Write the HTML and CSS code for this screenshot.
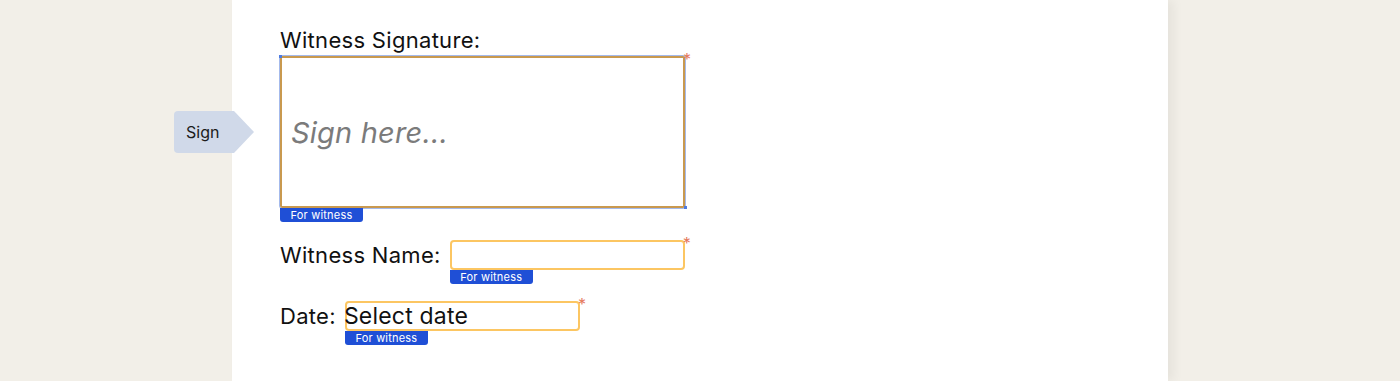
FILE: index.html
```html
<!DOCTYPE html>
<html lang="en">
<head>
    <meta charset="UTF-8">
    <meta name="viewport" content="width=device-width, initial-scale=1.0">
    <title>Witness Fields</title>
    <link rel="stylesheet" href="styles.css">
</head>
<body>
    <div class="paper">
        <div class="label sig-label">Witness Signature:</div>
        <div class="field sig-field">
            <div class="sign-tab">Sign</div>
            <div class="sig-box">Sign here...</div>
            <span class="handle handle-tl"></span>
            <span class="handle handle-br"></span>
            <span class="req">*</span>
            <div class="tag">For witness</div>
        </div>

        <div class="row">
            <span class="label">Witness Name:</span>
            <div class="field">
                <div class="input input-name"></div>
                <span class="req">*</span>
                <div class="tag">For witness</div>
            </div>
        </div>

        <div class="row">
            <span class="label">Date:</span>
            <div class="field">
                <div class="input input-date">Select date</div>
                <span class="req">*</span>
                <div class="tag">For witness</div>
            </div>
        </div>
    </div>
</body>
</html>
```

FILE: styles.css
```css
:root {
    --page-bg: #f2efe8;
    --tag-blue: #1f4fd6;
    --field-border: #fcc662;
    --sig-border: #c9994f;
    --req-color: #e5795c;
}

body {
    margin: 0;
    background-color: var(--page-bg);
    font-family: Inter, "Liberation Sans", sans-serif;
    color: #111;
}

.paper {
    width: 936px;
    height: 381px;
    margin: 0 auto;
    background: #fff;
    box-sizing: border-box;
    padding: 27px 48px 0;
    box-shadow: 6px 0 10px rgba(0, 0, 0, 0.05);
}

.label {
    font-size: 22px;
    letter-spacing: 0.3px;
    line-height: 26px;
    white-space: nowrap;
}

.sig-label {
    margin-bottom: 3px;
}

.field {
    position: relative;
    display: flex;
    flex-direction: column;
    align-items: flex-start;
    width: fit-content;
}

.sig-box {
    width: 405px;
    height: 152px;
    box-sizing: border-box;
    border: 2px solid var(--sig-border);
    border-radius: 2px;
    outline: 1px solid rgba(90, 130, 220, 0.55);
    display: flex;
    align-items: center;
    padding-left: 9px;
    font-size: 29px;
    letter-spacing: 0.2px;
    font-style: italic;
    color: #7b7b7b;
}

.handle {
    position: absolute;
    width: 3px;
    height: 3px;
    background: #4d7be0;
}

.handle-tl {
    left: -1px;
    top: -1px;
}

.handle-br {
    left: 404px;
    top: 150px;
}

.sign-tab {
    position: absolute;
    left: -106px;
    top: 55px;
    height: 42px;
    width: 60px;
    padding-left: 12px;
    box-sizing: border-box;
    background: #d0d9e9;
    border-radius: 4px 0 0 4px;
    font-size: 16px;
    line-height: 42px;
    color: #1b1b1b;
}

.sign-tab::after {
    content: "";
    position: absolute;
    left: 60px;
    top: 0;
    border-top: 21px solid transparent;
    border-bottom: 21px solid transparent;
    border-left: 20px solid #d0d9e9;
}

.req {
    position: absolute;
    right: -6px;
    top: -5px;
    font-size: 16px;
    line-height: 16px;
    color: var(--req-color);
}

.tag {
    width: 83px;
    height: 14px;
    background: var(--tag-blue);
    border-radius: 0 0 3px 3px;
    color: #fff;
    font-size: 11px;
    letter-spacing: 0.2px;
    line-height: 14px;
    text-align: center;
}

.row {
    display: flex;
    align-items: flex-start;
    gap: 9px;
    margin-top: 18px;
}

.row + .row {
    margin-top: 17px;
}

.row .label {
    line-height: 30px;
}

.input {
    height: 30px;
    box-sizing: border-box;
    border: 2px solid var(--field-border);
    border-radius: 4px;
    font-size: 23px;
    letter-spacing: 0.2px;
    line-height: 26px;
}

.input-name {
    width: 235px;
}

.input-date {
    width: 235px;
    text-indent: -3px;
}
```
